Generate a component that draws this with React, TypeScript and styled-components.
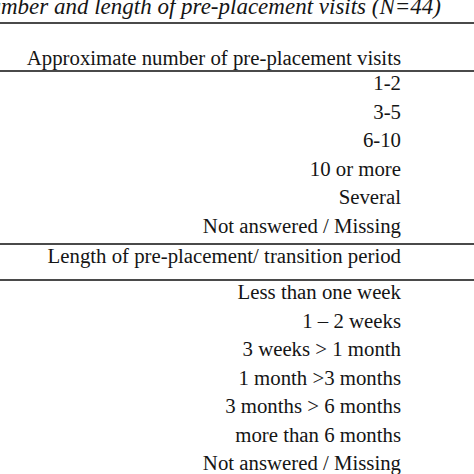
import styled, { createGlobalStyle } from 'styled-components';

const GlobalStyle = createGlobalStyle`
  html, body {
    margin: 0;
    padding: 0;
    background: #ffffff;
  }
  body {
    font-family: "Liberation Serif", "Times New Roman", serif;
    color: #151515;
    overflow: hidden;
  }
`;

const Table = styled.div`
  width: 474px;
  height: 474px;
  overflow: hidden;
  display: flex;
  flex-direction: column;
  font-size: 20.8px;
`;

// caption runs off the left edge of the crop, as in the source scan
const Caption = styled.div`
  height: 22px;
  flex-shrink: 0;
  line-height: 14.5px;
  font-size: 23px;
  display: flex;
  justify-content: flex-end;
  padding-right: 33px;
  white-space: nowrap;
  font-style: italic;
`;

const Rule = styled.div`
  height: 2px;
  flex-shrink: 0;
  background: #4a4a4a;
`;

const Heading = styled.div<{ $height: number; $top: number }>`
  height: ${(p) => p.$height}px;
  padding-top: ${(p) => p.$top}px;
  box-sizing: border-box;
  line-height: 22px;
  text-align: right;
  padding-right: 73px;
  white-space: nowrap;
  flex-shrink: 0;
`;

const Row = styled.div`
  height: 28.5px;
  line-height: 22px;
  text-align: right;
  padding-right: 73px;
  white-space: nowrap;
  flex-shrink: 0;
`;

const visits = ['1-2', '3-5', '6-10', '10 or more', 'Several', 'Not answered / Missing'];

const lengths = [
  'Less than one week',
  '1 – 2 weeks',
  '3 weeks > 1 month',
  '1 month >3 months',
  '3 months > 6 months',
  'more than 6 months',
  'Not answered / Missing',
];

const App = () => {
  return (
    <>
      <GlobalStyle />
      <Table>
        <Caption>Number and length of pre-placement visits (N=44)</Caption>
        <Rule />
        <Heading $height={46} $top={23}>
          Approximate number of pre-placement visits
        </Heading>
        <Rule />
        {visits.map((v) => (
          <Row key={v}>{v}</Row>
        ))}
        <Rule />
        <Heading $height={34} $top={0}>
          Length of pre-placement/ transition period
        </Heading>
        <Rule />
        {lengths.map((l) => (
          <Row key={l}>{l}</Row>
        ))}
      </Table>
    </>
  );
};

export default App;
